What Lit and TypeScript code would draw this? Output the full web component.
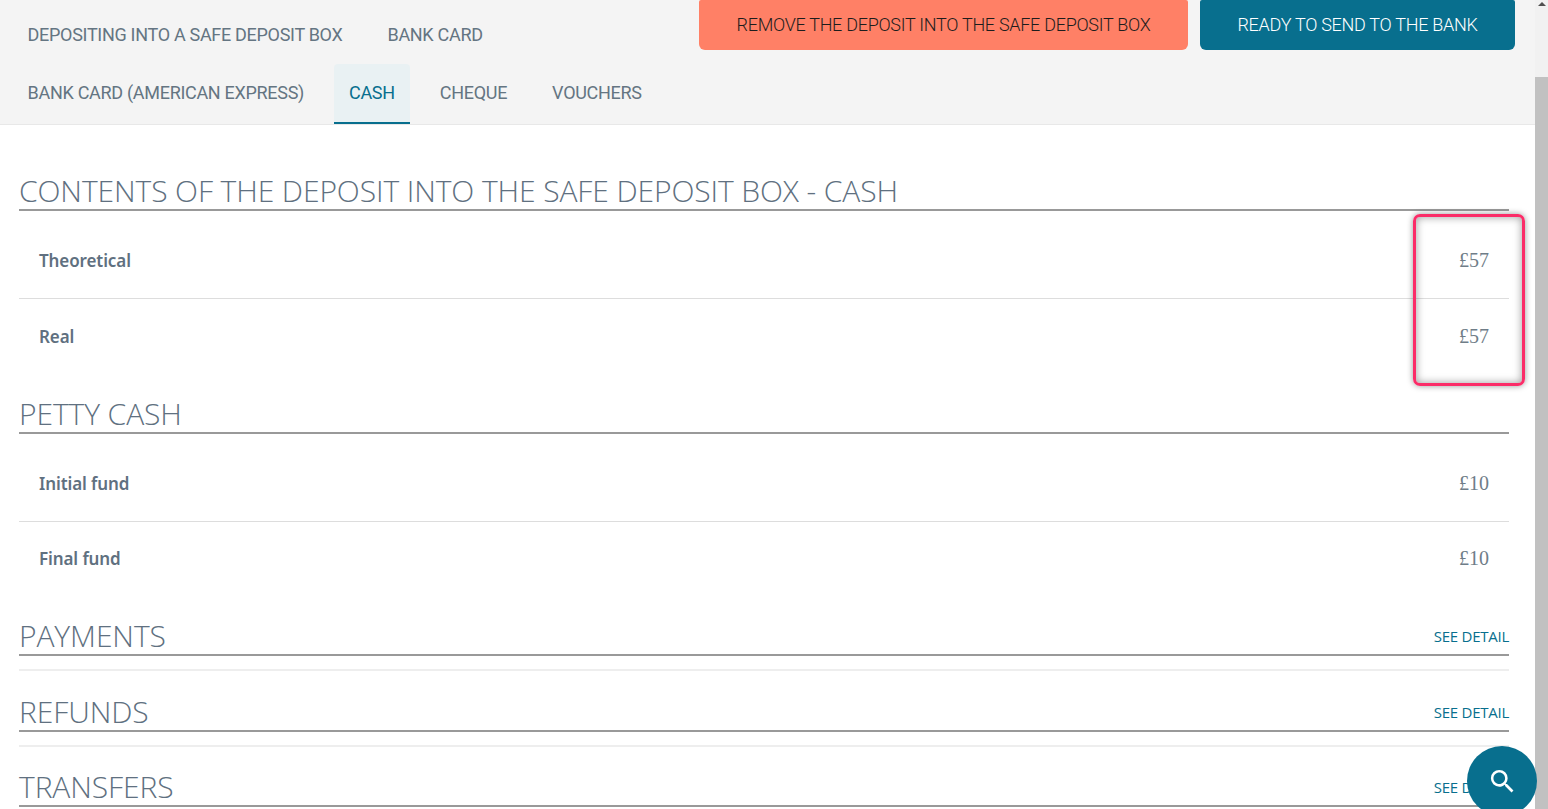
import { LitElement, html, css } from "lit";
import { customElement } from "lit/decorators.js";

@customElement("app-root")
export class AppRoot extends LitElement {
  static styles = css`
    :host { display: flex; width: 100%; height: 809px; overflow: hidden; position: relative; background: #fff; color: #607080; font-family: "Roboto", sans-serif; }
    .page { flex: 1; min-width: 0; }
    .scrollbar { width: 13px; background: #f1f1f1; display: flex; flex-direction: column; align-items: center; }
    .arrow { height: 14px; flex: none; display: flex; justify-content: center; padding-top: 2px; box-sizing: border-box; }
    .arrow i { display: block; width: 0; height: 0; border-left: 4px solid transparent; border-right: 4px solid transparent; border-bottom: 4px solid #505050; }
    .gap { height: 63px; flex: none; }
    .thumb { flex: 1; width: 100%; background: #c1c1c1; }
    header { height: 124px; background: #f4f4f4; border-bottom: 1px solid #e8e8e8; display: flex; box-sizing: content-box; }
    .tabs { width: 699px; flex: none; padding: 6px 0 0 12.6px; box-sizing: border-box; }
    .tab-row { display: flex; }
    .tab-row + .tab-row { padding-left: .4px; margin-left: -.4px; }
    .tab { height: 60px; padding: 0 15px 4px; margin-right: 15px; display: flex; align-items: center; font-size: 18px; letter-spacing: -0.3px; font-weight: 400; color: #647582; box-sizing: border-box; border-radius: 4px 4px 0 0; white-space: nowrap; }
    .tab.short { height: 58px; padding-bottom: 2px; }
    .tab.active { color: #086f8e; background: #e9f1f3; border-bottom: 2px solid #086f8e; padding-bottom: 2px; }
    .btns { display: flex; gap: 12px; align-items: flex-start; }
    .btn { height: 50px; padding-bottom: 2px; display: flex; align-items: center; justify-content: center; border-radius: 2px 2px 6px 6px; font-size: 18px; letter-spacing: -0.28px; font-weight: 300; box-sizing: border-box; white-space: nowrap; }
    .btn.rm { width: 489px; background: #ff8066; color: #1d1d1d; }
    .btn.ok { width: 315px; background: #086f8e; color: #fff; }
    main { padding: 0 26px 0 19px; }
    .head { display: flex; justify-content: space-between; align-items: flex-end; height: 60.5px; border-bottom: 2px solid #999; box-sizing: border-box; }
    .head h2 { margin: 0; font: 300 30px/36px "Open Sans", sans-serif; color: #607080; letter-spacing: -0.1px; white-space: nowrap; }
    .see { font: 400 15px/20px "Open Sans", sans-serif; color: #086f8e; margin-bottom: 8px; letter-spacing: -0.25px; }
    .first { margin-top: 25.5px; }
    .rows { margin-top: 12px; }
    .row { height: 75px; padding: 0 20px; display: flex; justify-content: space-between; align-items: center; box-sizing: border-box; }
    .row + .row { border-top: 1px solid #ddd; }
    .row b { font: 600 17px "Noto Sans", sans-serif; letter-spacing: -0.1px; color: #607080; }
    .row span { font: 400 20px "Liberation Serif", serif; color: #6f7d88; }
    .sp { border-bottom: 2px solid #eee; height: 15px; box-sizing: border-box; }
    .mark { position: absolute; left: 1413px; top: 214px; width: 112px; height: 172px; box-sizing: border-box; border: 3px solid #fb2c68; border-radius: 7px; box-shadow: 0 0 6px rgba(0,0,0,.4), inset 0 0 8px rgba(0,0,0,.4); pointer-events: none; }
    .fab { position: absolute; left: 1467px; top: 746px; width: 70px; height: 70px; border-radius: 50%; background: #086f8e; display: flex; align-items: center; justify-content: center; }
    .fab svg { width: 31px; height: 31px; fill: #fff; }
  `;

  private row(a: string, b: string) {
    return html`<div class="row"><b>${a}</b><span>${b}</span></div>`;
  }

  render() {
    return html`
      <div class="page">
        <header>
          <nav class="tabs">
            <div class="tab-row">
              <div class="tab short">DEPOSITING INTO A SAFE DEPOSIT BOX</div>
              <div class="tab short">BANK CARD</div>
            </div>
            <div class="tab-row">
              <div class="tab">BANK CARD (AMERICAN EXPRESS)</div>
              <div class="tab active">CASH</div>
              <div class="tab">CHEQUE</div>
              <div class="tab">VOUCHERS</div>
            </div>
          </nav>
          <div class="btns">
            <div class="btn rm">REMOVE THE DEPOSIT INTO THE SAFE DEPOSIT BOX</div>
            <div class="btn ok">READY TO SEND TO THE BANK</div>
          </div>
        </header>
        <main>
          <div class="head first"><h2>CONTENTS OF THE DEPOSIT INTO THE SAFE DEPOSIT BOX - CASH</h2></div>
          <div class="rows">${this.row("Theoretical", "£57")}${this.row("Real", "£57")}</div>
          <div class="head"><h2>PETTY CASH</h2></div>
          <div class="rows">${this.row("Initial fund", "£10")}${this.row("Final fund", "£10")}</div>
          <div class="head"><h2>PAYMENTS</h2><a class="see">SEE DETAIL</a></div>
          <div class="sp"></div>
          <div class="head"><h2>REFUNDS</h2><a class="see">SEE DETAIL</a></div>
          <div class="sp"></div>
          <div class="head"><h2>TRANSFERS</h2><a class="see">SEE DETAIL</a></div>
        </main>
      </div>
      <div class="scrollbar"><div class="arrow"><i></i></div><div class="gap"></div><div class="thumb"></div></div>
      <div class="mark"></div>
      <div class="fab"><svg viewBox="0 0 24 24"><path d="M15.5 14h-.79l-.28-.27A6.47 6.47 0 0 0 16 9.5 6.5 6.5 0 1 0 9.5 16c1.61 0 3.09-.59 4.23-1.57l.27.28v.79l5 4.99L20.49 19l-4.99-5zm-6 0C7.01 14 5 11.99 5 9.5S7.01 5 9.5 5 14 7.01 14 9.5 11.99 14 9.5 14z"/></svg></div>
    `;
  }
}
